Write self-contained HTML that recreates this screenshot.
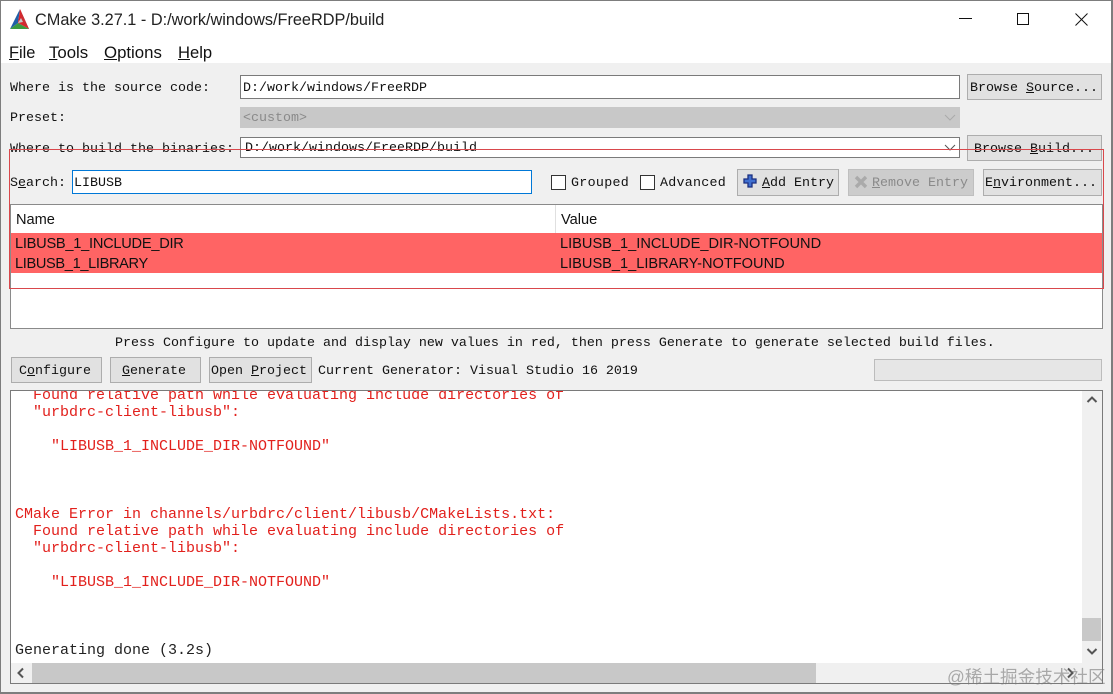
<!DOCTYPE html>
<html><head><meta charset="utf-8"><style>
html,body{margin:0;padding:0;background:#f0f0f0}
#w{position:relative;width:1113px;height:694px;overflow:hidden;background:#f0f0f0}
#w div,#w span.a,#w svg{position:absolute;box-sizing:border-box}
.t{white-space:pre;font-family:"Liberation Mono",monospace;font-size:13.33px;color:#111;line-height:16px;height:16px;margin-top:1px}
.s{white-space:pre;font-family:"Liberation Sans",sans-serif;color:#111;line-height:20px;height:20px}
.r{white-space:pre;font-family:"Liberation Mono",monospace;font-size:15px;color:#e2201c;line-height:17px;height:17px;margin-top:1px}
.b{background:#e1e1e1;border:1px solid #adadad}
.f{background:#fff;border:1px solid #7a7a7a}
u{text-decoration:underline}
</style></head><body><div id="w">
<div style="left:0;top:0;width:1113px;height:63px;background:#fff"></div>
<div style="left:0;top:0;width:1113px;height:694px;border:2px solid #7d7d7d;border-width:1px 2px 2px 1px;z-index:9"></div>

<svg style="left:9px;top:8px" width="22" height="22" viewBox="0 0 22 22">
<polygon points="11,1 1,21 9,15" fill="#1f5fa8"/>
<polygon points="11,1 9,15 20,21" fill="#d8262c"/>
<polygon points="11,1 20,21 14,14" fill="#c92f34"/>
<polygon points="1,21 20,21 9,15" fill="#3a9a3f"/>
<polygon points="9,15 14,14 12,10" fill="#c8c8c8"/>
</svg>
<div class="s" style="left:35px;top:10px;font-size:16.3px;color:#222">CMake 3.27.1 - D:/work/windows/FreeRDP/build</div>
<div style="left:959px;top:18px;width:13px;height:1px;background:#111"></div>
<div style="left:1017px;top:13px;width:12px;height:12px;border:1px solid #111"></div>
<svg style="left:1075px;top:13px" width="13" height="13" viewBox="0 0 13 13"><path d="M.5.5L12.5 12.5M12.5.5L.5 12.5" stroke="#111" stroke-width="1" fill="none"/></svg>

<div class="s" style="left:9px;top:43px;font-size:16.4px"><u>F</u>ile</div>
<div class="s" style="left:49px;top:43px;font-size:16.8px"><u>T</u>ools</div>
<div class="s" style="left:104px;top:43px;font-size:16.8px"><u>O</u>ptions</div>
<div class="s" style="left:178px;top:43px;font-size:16.6px"><u>H</u>elp</div>

<div class="t" style="left:10px;top:80px">Where is the source code:</div>
<div class="f" style="left:240px;top:75px;width:720px;height:24px"></div>
<div class="t" style="left:243px;top:80px">D:/work/windows/FreeRDP</div>
<div class="b" style="left:967px;top:74px;width:135px;height:26px"></div>
<div class="t" style="left:970px;top:80px">Browse <u>S</u>ource...</div>

<div class="t" style="left:10px;top:110px">Preset:</div>
<div style="left:240px;top:107px;width:720px;height:21px;background:#c8c8c8"></div>
<div class="t" style="left:243px;top:110px;color:#8a8a8a">&lt;custom&gt;</div>
<svg style="left:944px;top:114px" width="12" height="8" viewBox="0 0 12 8"><path d="M1 1L6 6L11 1" stroke="#aaa" fill="none"/></svg>

<div class="t" style="left:10px;top:141px">Where to build the binaries:</div>
<div class="f" style="left:240px;top:137px;width:720px;height:21px"></div>
<div class="t" style="left:245px;top:140px">D:/work/windows/FreeRDP/build</div>
<svg style="left:944px;top:144px" width="12" height="8" viewBox="0 0 12 8"><path d="M1 1L6 6L11 1" stroke="#555" fill="none"/></svg>
<div class="b" style="left:967px;top:135px;width:135px;height:26px"></div>
<div class="t" style="left:974px;top:141px">Browse <u>B</u>uild...</div>

<div class="t" style="left:10px;top:175px">S<u>e</u>arch:</div>
<div style="left:72px;top:170px;width:460px;height:24px;background:#fff;border:1px solid #0078d7"></div>
<div class="t" style="left:74px;top:175px">LIBUSB</div>
<div style="left:551px;top:175px;width:15px;height:15px;background:#fff;border:1px solid #333"></div>
<div class="t" style="left:571px;top:175px;letter-spacing:.3px">Grouped</div>
<div style="left:640px;top:175px;width:15px;height:15px;background:#fff;border:1px solid #333"></div>
<div class="t" style="left:660px;top:175px;letter-spacing:.25px">Advanced</div>

<div class="b" style="left:737px;top:169px;width:102px;height:27px"></div>
<svg style="left:743px;top:174px" width="14" height="14" viewBox="0 0 14 14"><path d="M5 1H9V5H13V9H9V13H5V9H1V5H5Z" fill="#3f6fd0" stroke="#1b2f80" stroke-width="1.3"/></svg>
<div class="t" style="left:762px;top:175px"><u>A</u>dd Entry</div>
<div style="left:848px;top:169px;width:126px;height:27px;background:#cccccc;border:1px solid #bfbfbf"></div>
<svg style="left:854px;top:175px" width="14" height="14" viewBox="0 0 14 14"><path d="M2 2L12 12M12 2L2 12" stroke="#aaa" stroke-width="3.4"/></svg>
<div class="t" style="left:872px;top:175px;color:#8a8a8a"><u>R</u>emove Entry</div>
<div class="b" style="left:983px;top:169px;width:119px;height:27px"></div>
<div class="t" style="left:985px;top:175px">E<u>n</u>vironment...</div>

<div style="left:10px;top:204px;width:1093px;height:125px;background:#fff;border:1px solid #8a8a8a"></div>
<div style="left:555px;top:205px;width:1px;height:28px;background:#e0e0e0"></div>
<div class="s" style="left:16px;top:210px;font-size:14.6px">Name</div>
<div class="s" style="left:561px;top:210px;font-size:14.6px">Value</div>
<div style="left:11px;top:233px;width:1091px;height:40px;background:#ff6464"></div>
<div class="s" style="left:15px;top:234px;font-size:14.6px;letter-spacing:-.25px">LIBUSB_1_INCLUDE_DIR</div>
<div class="s" style="left:15px;top:254px;font-size:14.6px;letter-spacing:-.35px">LIBUSB_1_LIBRARY</div>
<div class="s" style="left:560px;top:234px;font-size:14.6px">LIBUSB_1_INCLUDE_DIR-NOTFOUND</div>
<div class="s" style="left:560px;top:254px;font-size:14.6px">LIBUSB_1_LIBRARY-NOTFOUND</div>

<div style="left:9px;top:149px;width:1095px;height:140px;border:1px solid #d9484c;z-index:5"></div>

<div class="t" style="left:115px;top:335px">Press Configure to update and display new values in red, then press Generate to generate selected build files.</div>

<div class="b" style="left:11px;top:357px;width:91px;height:26px"></div>
<div class="t" style="left:19px;top:363px">C<u>o</u>nfigure</div>
<div class="b" style="left:110px;top:357px;width:91px;height:26px"></div>
<div class="t" style="left:122px;top:363px"><u>G</u>enerate</div>
<div class="b" style="left:209px;top:357px;width:103px;height:26px"></div>
<div class="t" style="left:211px;top:363px">Open <u>P</u>roject</div>
<div class="t" style="left:318px;top:363px">Current Generator: Visual Studio 16 2019</div>
<div style="left:874px;top:359px;width:228px;height:22px;background:#e6e6e6;border:1px solid #bcbcbc"></div>

<div style="left:10px;top:390px;width:1093px;height:294px;background:#fff;border:1px solid #7a7a7a;overflow:hidden"></div>
<div style="left:11px;top:391px;width:1071px;height:272px;overflow:hidden">
<div class="r" style="left:4px;top:-5px">  Found relative path while evaluating include directories of</div>
<div class="r" style="left:4px;top:12px">  "urbdrc-client-libusb":</div>
<div class="r" style="left:4px;top:46px">    "LIBUSB_1_INCLUDE_DIR-NOTFOUND"</div>
<div class="r" style="left:4px;top:114px">CMake Error in channels/urbdrc/client/libusb/CMakeLists.txt:</div>
<div class="r" style="left:4px;top:131px">  Found relative path while evaluating include directories of</div>
<div class="r" style="left:4px;top:148px">  "urbdrc-client-libusb":</div>
<div class="r" style="left:4px;top:182px">    "LIBUSB_1_INCLUDE_DIR-NOTFOUND"</div>
<div class="r" style="left:4px;top:250px;color:#222">Generating done (3.2s)</div>
</div>

<div style="left:1082px;top:391px;width:20px;height:272px;background:#f0f0f0"></div>
<div style="left:1082px;top:618px;width:19px;height:23px;background:#c8c8c8"></div>
<svg style="left:1086px;top:395px" width="12" height="9" viewBox="0 0 12 9"><path d="M1.5 7L6 2.5L10.5 7" stroke="#555" stroke-width="2" fill="none"/></svg>
<svg style="left:1086px;top:647px" width="12" height="9" viewBox="0 0 12 9"><path d="M1.5 2L6 6.5L10.5 2" stroke="#555" stroke-width="2" fill="none"/></svg>
<div style="left:11px;top:663px;width:1091px;height:20px;background:#f0f0f0"></div>
<div style="left:32px;top:663px;width:784px;height:20px;background:#c8c8c8"></div>
<svg style="left:16px;top:667px" width="9" height="12" viewBox="0 0 9 12"><path d="M7 1.5L2.5 6L7 10.5" stroke="#555" stroke-width="2" fill="none"/></svg>
<svg style="left:1066px;top:667px" width="9" height="12" viewBox="0 0 9 12"><path d="M2 1.5L6.5 6L2 10.5" stroke="#555" stroke-width="2" fill="none"/></svg>

<div style="left:947px;top:666px;white-space:pre;font-family:'Liberation Sans','Noto Sans CJK SC',sans-serif;font-size:17.6px;line-height:22px;color:rgba(120,120,120,.6);z-index:10">@稀土掘金技术社区</div>
</div></body></html>
